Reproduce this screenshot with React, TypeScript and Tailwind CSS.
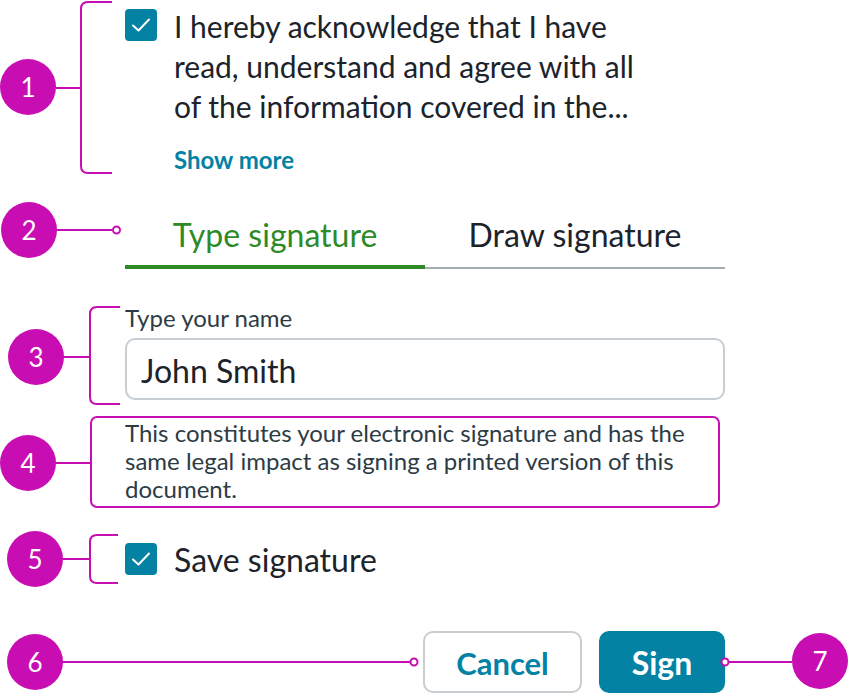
import React from "react";

const MAG = "#c80db2";

function Check() {
  return (
    <div className="w-[32px] h-[32px] rounded-[4px] bg-[#0382a3] flex items-center justify-center shrink-0">
      <svg width="32" height="32" viewBox="0 0 32 32" fill="none">
        <path d="M8 16.5 L13.5 21.5 L24 10.5" stroke="white" strokeWidth="2" strokeLinecap="round" strokeLinejoin="round" />
      </svg>
    </div>
  );
}

function Badge({ n, cls }: { n: string; cls: string }) {
  return (
    <div className={`absolute w-[56px] h-[56px] rounded-full bg-[#c80db2] text-white flex items-center justify-center text-[26px] ${cls}`}>
      {n}
    </div>
  );
}

export default function App() {
  return (
    <div className="relative w-[848px] h-[695px] bg-white overflow-hidden text-[#1c232b]" style={{ fontFamily: "Lato, 'Noto Sans', sans-serif" }}>
      <div className="ml-[125px] w-[600px] flex flex-col">
        <div className="flex items-start gap-[17px] pt-[6px]">
          <div className="mt-[3px]"><Check /></div>
          <p className="text-[30px] leading-[40px] w-[480px]">
            I hereby acknowledge that I have read, understand and agree with all of the information covered in the...
          </p>
        </div>
        <div className="ml-[49px] mt-[18px] text-[24px] leading-[32px] font-bold text-[#0382a3]">Show more</div>
        <div className="mt-[27px] flex border-b-2 border-[#a5adb1]">
          <div className="w-[300px] text-center pt-[12px] pb-[10px] border-b-4 border-[#2e8a26] -mb-[2px] text-[32px] leading-[40px] text-[#2e8a26]">
            Type signature
          </div>
          <div className="w-[300px] text-center pt-[12px] pb-[12px] text-[32px] leading-[40px]">Draw signature</div>
        </div>
        <label className="mt-[35px] text-[24px] leading-[28px] text-[#2d3b45]">Type your name</label>
        <div className="mt-[6px] h-[62px] border-2 border-[#c7cdd1] rounded-[10px] flex items-center px-[14px] pt-[3px] text-[32px]">
          John Smith
        </div>
        <p className="mt-[19px] text-[24px] leading-[28px] text-[#2d3b45]">
          This constitutes your electronic signature and has the same legal impact as signing a printed version of this document.
        </p>
        <div className="mt-[37px] flex items-center gap-[17px]">
          <Check />
          <span className="text-[32px] leading-[36px] pt-[2px]">Save signature</span>
        </div>
        <div className="mt-[53px] flex justify-end gap-[17px]">
          <button className="w-[159px] h-[62px] border-2 border-[#c7cdd1] rounded-[10px] text-[31px] font-bold text-[#0382a3] pt-[2px]">Cancel</button>
          <button className="w-[126px] h-[62px] rounded-[10px] bg-[#0382a3] text-[32px] font-bold text-white pt-[2px]">Sign</button>
        </div>
      </div>

      <svg className="absolute left-0 top-0" width="848" height="695" fill="none" stroke={MAG} strokeWidth="2">
        <path d="M112 2 H88 Q81 2 81 9 V166 Q81 173 88 173 H112" />
        <path d="M56 88 H81" />
        <path d="M56 230 H112" />
        <circle cx="116.5" cy="230" r="3.5" fill="white" />
        <path d="M120 307 H97 Q90 307 90 314 V397 Q90 404 97 404 H120" />
        <path d="M63 357 H90" />
        <rect x="91" y="417" width="628" height="90" rx="6" />
        <path d="M55 463 H91" />
        <path d="M118 535 H97 Q90 535 90 542 V576 Q90 583 97 583 H118" />
        <path d="M63 559 H90" />
        <path d="M62 662 H410" />
        <circle cx="414" cy="662" r="3.5" fill="white" />
        <path d="M729 662 H792" />
        <circle cx="725" cy="662" r="3.5" fill="white" />
      </svg>

      <Badge n="1" cls="left-0 top-[59px]" />
      <Badge n="2" cls="left-[1px] top-[202px]" />
      <Badge n="3" cls="left-[8px] top-[329px]" />
      <Badge n="4" cls="left-0 top-[435px]" />
      <Badge n="5" cls="left-[7px] top-[531px]" />
      <Badge n="6" cls="left-[7px] top-[634px]" />
      <Badge n="7" cls="left-[792px] top-[633px]" />
    </div>
  );
}
